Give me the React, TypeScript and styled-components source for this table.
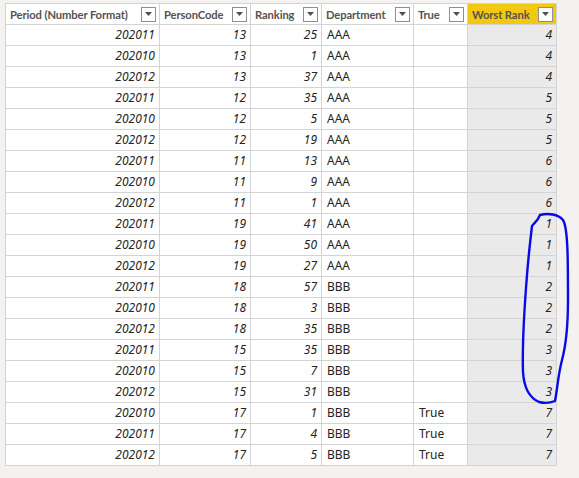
import React from "react";
import styled, { createGlobalStyle } from "styled-components";

const Global = createGlobalStyle`
  html, body { margin: 0; padding: 0; background: #f3f2f1; }
  body { font-family: "Noto Sans", "Open Sans", sans-serif; }
`;

const Page = styled.div`
  position: relative;
  width: 579px;
  height: 478px;
  padding: 3px 0 0 5px;
  box-sizing: border-box;
  overflow: hidden;
`;

const Table = styled.table`
  border-collapse: separate;
  border-spacing: 0;
  table-layout: fixed;
  width: 552px;
  border-left: 1px solid #d4d4d4;
  border-top: 1px solid #d4d4d4;
  background: #ffffff;
  font-size: 12px;
`;

const Col = styled.col<{ $w: number }>`
  width: ${(p) => p.$w}px;
`;

const Th = styled.th<{ $active?: boolean }>`
  box-sizing: border-box;
  height: 21px;
  padding: 0 3px 0 4px;
  border-right: 1px solid #d4d4d4;
  border-bottom: 1px solid #d4d4d4;
  background: ${(p) => (p.$active ? "#f2c811" : "#ffffff")};
  color: #555350;
  font-family: "Lato", "Noto Sans", sans-serif;
  font-size: 11.2px;
  font-weight: 700;
  letter-spacing: -0.1px;
  text-align: left;
  white-space: nowrap;
`;

const HeadInner = styled.div`
  display: flex;
  align-items: center;
  justify-content: space-between;
  gap: 3px;
`;

const HeadLabel = styled.span`
  min-width: 0;
`;

const FilterBox = styled.span`
  flex: none;
  width: 15px;
  height: 15px;
  box-sizing: border-box;
  border: 1px solid #8f8f8f;
  background: #ffffff;
  display: flex;
  align-items: center;
  justify-content: center;
`;

const Td = styled.td<{ $num?: boolean; $shade?: boolean }>`
  box-sizing: border-box;
  height: 21px;
  padding: 0 4px 0 ${(p) => (p.$num ? "4px" : "5px")};
  border-right: 1px solid #d4d4d4;
  border-bottom: 1px solid #d4d4d4;
  background: ${(p) => (p.$shade ? "#eaeaea" : "#ffffff")};
  color: #252423;
  font-style: ${(p) => (p.$num ? "italic" : "normal")};
  text-align: ${(p) => (p.$num ? "right" : "left")};
  white-space: nowrap;
  line-height: 20px;
`;

const Overlay = styled.svg`
  position: absolute;
  left: 0;
  top: 0;
  pointer-events: none;
`;

const Filter = () => (
  <FilterBox>
    <svg width="7" height="4" viewBox="0 0 7 4">
      <path d="M0 0 H7 L3.5 4 Z" fill="#505050" />
    </svg>
  </FilterBox>
);

const headers = [
  "Period (Number Format)",
  "PersonCode",
  "Ranking",
  "Department",
  "True",
  "Worst Rank",
];
const widths = [154, 91, 71, 92, 54, 89];

type Row = [string, string, string, string, string, string];
const rows: Row[] = [
  ["202011", "13", "25", "AAA", "", "4"],
  ["202010", "13", "1", "AAA", "", "4"],
  ["202012", "13", "37", "AAA", "", "4"],
  ["202011", "12", "35", "AAA", "", "5"],
  ["202010", "12", "5", "AAA", "", "5"],
  ["202012", "12", "19", "AAA", "", "5"],
  ["202011", "11", "13", "AAA", "", "6"],
  ["202010", "11", "9", "AAA", "", "6"],
  ["202012", "11", "1", "AAA", "", "6"],
  ["202011", "19", "41", "AAA", "", "1"],
  ["202010", "19", "50", "AAA", "", "1"],
  ["202012", "19", "27", "AAA", "", "1"],
  ["202011", "18", "57", "BBB", "", "2"],
  ["202010", "18", "3", "BBB", "", "2"],
  ["202012", "18", "35", "BBB", "", "2"],
  ["202011", "15", "35", "BBB", "", "3"],
  ["202010", "15", "7", "BBB", "", "3"],
  ["202012", "15", "31", "BBB", "", "3"],
  ["202010", "17", "1", "BBB", "True", "7"],
  ["202011", "17", "4", "BBB", "True", "7"],
  ["202012", "17", "5", "BBB", "True", "7"],
];

export default function App() {
  return (
    <>
      <Global />
      <Page>
        <Table>
          <colgroup>
            {widths.map((w, i) => (
              <Col key={i} $w={w} />
            ))}
          </colgroup>
          <thead>
            <tr>
              {headers.map((h, i) => (
                <Th key={h} $active={i === 5}>
                  <HeadInner>
                    <HeadLabel>{h}</HeadLabel>
                    <Filter />
                  </HeadInner>
                </Th>
              ))}
            </tr>
          </thead>
          <tbody>
            {rows.map((r, i) => (
              <tr key={i}>
                <Td $num>{r[0]}</Td>
                <Td $num>{r[1]}</Td>
                <Td $num>{r[2]}</Td>
                <Td>{r[3]}</Td>
                <Td>{r[4]}</Td>
                <Td $num $shade>
                  {r[5]}
                </Td>
              </tr>
            ))}
          </tbody>
        </Table>
        <Overlay width="579" height="478" viewBox="0 0 579 478">
          <path
            d="M540,215 C548,213 558,214 563,220 C568,228 568,260 568,300 C568,330 566,345 562,360 C558,375 557,392 555,401 C550,403 543,403 539,402 C530,398 524,388 523,372 C522,340 525,300 527,275 C529,250 531,235 532,226 C535,222 537,222 540,215"
            fill="none"
            stroke="#0a0ae6"
            strokeWidth="2.4"
            strokeLinecap="round"
            strokeLinejoin="round"
          />
        </Overlay>
      </Page>
    </>
  );
}
